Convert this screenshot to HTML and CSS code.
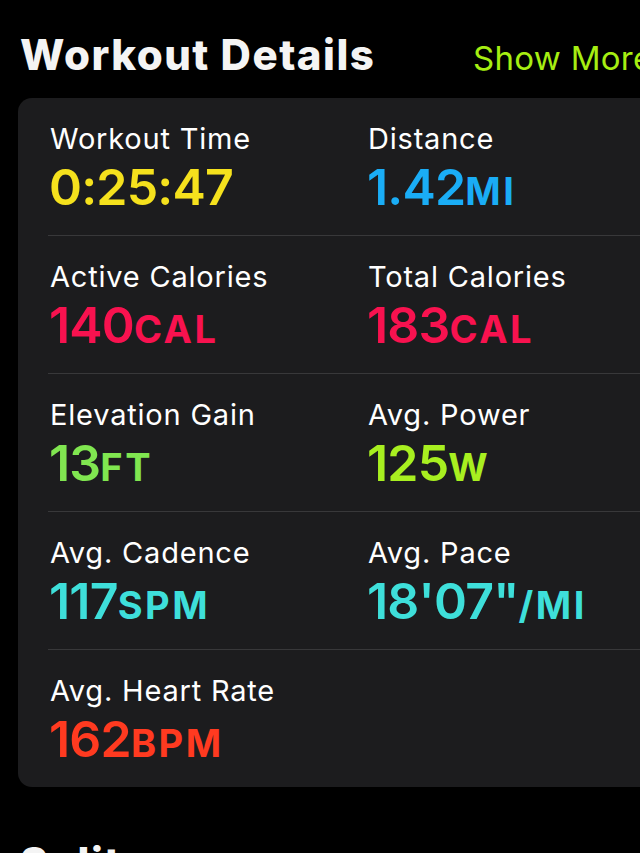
FILE: index.html
```html
<!DOCTYPE html>
<html lang="en">
<head>
<meta charset="utf-8">
<title>Workout Details</title>
<link rel="stylesheet" href="styles.css">
</head>
<body>
<div class="page">
  <div class="section-head">
    <h1 class="section-title">Workout Details</h1>
    <a class="show-more">Show More</a>
  </div>
  <div class="card">
    <div class="row">
      <div class="metric">
        <div class="label">Workout Time</div>
        <div class="value c-yellow">0:25:47</div>
      </div>
      <div class="metric">
        <div class="label">Distance</div>
        <div class="value c-blue">1.42<span class="unit">mi</span></div>
      </div>
    </div>
    <div class="row">
      <div class="metric">
        <div class="label">Active Calories</div>
        <div class="value c-pink">140<span class="unit">cal</span></div>
      </div>
      <div class="metric">
        <div class="label">Total Calories</div>
        <div class="value c-pink">183<span class="unit">cal</span></div>
      </div>
    </div>
    <div class="row">
      <div class="metric">
        <div class="label">Elevation Gain</div>
        <div class="value c-green">13<span class="unit">ft</span></div>
      </div>
      <div class="metric">
        <div class="label">Avg. Power</div>
        <div class="value c-lime">125<span class="unit">w</span></div>
      </div>
    </div>
    <div class="row">
      <div class="metric">
        <div class="label">Avg. Cadence</div>
        <div class="value c-cyan">117<span class="unit">spm</span></div>
      </div>
      <div class="metric">
        <div class="label">Avg. Pace</div>
        <div class="value c-cyan">18'07"<span class="unit">/mi</span></div>
      </div>
    </div>
    <div class="row">
      <div class="metric">
        <div class="label">Avg. Heart Rate</div>
        <div class="value c-red">162<span class="unit">bpm</span></div>
      </div>
    </div>
  </div>
  <div class="section-head next">
    <h2 class="section-title">Splits</h2>
    <a class="show-more">Show More</a>
  </div>
</div>
</body>
</html>
```
FILE: styles.css
```css
html, body {
  margin: 0;
  padding: 0;
  background: #000;
  overflow: hidden;
}
body {
  font-family: Inter, "Liberation Sans", sans-serif;
  color: #fff;
  width: 640px;
  height: 853px;
}
.page {
  width: 708px;
  padding: 30px 18px 0 18px;
  box-sizing: border-box;
}
.section-head {
  display: grid;
  grid-template-columns: 453px auto;
  align-items: baseline;
  padding-left: 2px;
  height: 50px;
}
.section-head.next {
  margin-top: 51px;
}
.section-title {
  margin: 0;
  font-size: 42px;
  line-height: 50px;
  font-weight: 800;
  letter-spacing: 1.5px;
  color: #f4f4f4;
}
.show-more {
  font-size: 33px;
  line-height: 50px;
  letter-spacing: 0.3px;
  color: #a6ee12;
  font-weight: 400;
  white-space: nowrap;
}
.card {
  margin-top: 18px;
  background: #1c1c1e;
  border-radius: 14px;
  padding: 0 48px 0 30px;
}
.row {
  display: grid;
  grid-template-columns: 318px 1fr;
  height: 137px;
  box-sizing: border-box;
  padding-top: 24px;
}
.row + .row {
  border-top: 1px solid #38383a;
  height: 138px;
}
.label {
  font-size: 29px;
  line-height: 34px;
  font-weight: 400;
  letter-spacing: 0.8px;
  color: #fff;
  padding-left: 2px;
}
.value {
  margin-top: 3px;
  font-size: 50px;
  line-height: 56px;
  font-weight: 600;
  letter-spacing: -0.8px;
  padding-left: 1px;
}
.unit {
  font-size: 38px;
  font-weight: 700;
  letter-spacing: 2.5px;
  text-transform: uppercase;
}
.c-yellow { color: #f5e11d; }
.c-blue { color: #1aadf6; }
.c-pink { color: #f8124f; }
.c-green { color: #80e650; }
.c-lime { color: #a8ef20; }
.c-cyan { color: #3edfda; }
.c-red { color: #ff3a20; }
```
